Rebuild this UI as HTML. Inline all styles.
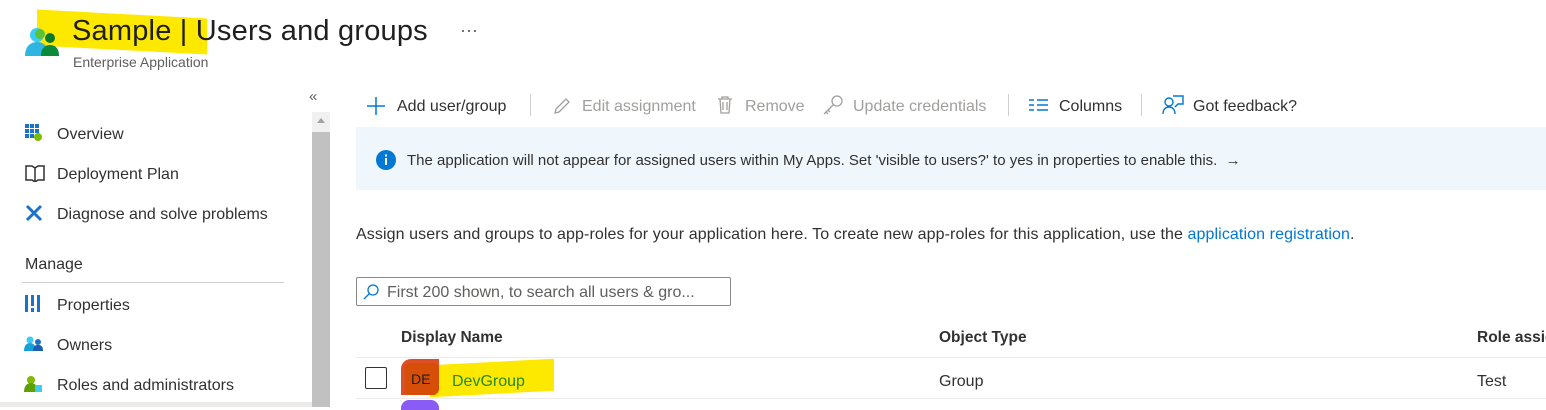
<!DOCTYPE html>
<html><head><meta charset="utf-8"><style>
*{margin:0;padding:0;box-sizing:border-box}
body{width:1546px;height:407px;overflow:hidden;background:#fff;font-family:"Segoe UI","Liberation Sans",sans-serif;color:#323130;position:relative;font-size:16px}
.a{position:absolute;white-space:nowrap}
.t{margin-top:2px}
.g{color:#a19f9d}
</style></head><body>
<div class="a" style="left:37px;top:14px;width:170px;height:36px;background:#fde800;transform:skewY(3deg)"></div>
<svg class="a" style="left:24px;top:26px" width="38" height="32" viewBox="0 0 38 32">
<circle cx="13" cy="9" r="7" fill="#3ccbf4"/><path d="M1 30c0-10 6-14 12-14s12 4 12 14z" fill="#30b5e0"/>
<circle cx="26" cy="12" r="5" fill="#0b7a2b"/><path d="M17 30c0-8 4-11 9-11s9 3 9 11z" fill="#0b8a3a"/>
<circle cx="16" cy="8" r="5" fill="#5bc236"/></svg>
<div class="a t" style="left:72px;top:13px;font-size:29px;color:#201f1e;letter-spacing:0.2px">Sample | Users and groups</div>
<div class="a" style="left:460px;top:20px;font-size:18px;color:#605e5c">···</div>
<div class="a t" style="left:73px;top:52px;font-size:14px;color:#605e5c">Enterprise Application</div>
<div class="a" style="left:309px;top:88px;font-size:15px;color:#605e5c">«</div>
<div class="a" style="left:312px;top:112px;width:18px;height:295px;background:#c1c1c1"></div>
<div class="a" style="left:312px;top:112px;width:18px;height:20px;background:#f0f0f0"></div>
<div class="a" style="left:317px;top:118px;border:4px solid transparent;border-bottom:5px solid #a3a3a3;border-top:0"></div>
<svg class="a" style="left:25px;top:124px" width="18" height="18"><g fill="#1a73c8"><rect x="0" y="0" width="4" height="4"/><rect x="5" y="0" width="4" height="4"/><rect x="10" y="0" width="4" height="4"/><rect x="0" y="5" width="4" height="4"/><rect x="5" y="5" width="4" height="4"/><rect x="10" y="5" width="4" height="4"/><rect x="0" y="10" width="4" height="4"/><rect x="5" y="10" width="4" height="4"/></g><circle cx="13" cy="13" r="4" fill="#7fba00"/></svg>
<div class="a t" style="left:57px;top:124px">Overview</div>
<svg class="a" style="left:25px;top:164px" width="20" height="18"><path d="M1 2h6l3 2 3-2h6v14h-6l-3 2-3-2H1z M10 4v14" fill="none" stroke="#323130" stroke-width="1.5"/></svg>
<div class="a t" style="left:57px;top:164px">Deployment Plan</div>
<svg class="a" style="left:25px;top:204px" width="18" height="18"><path d="M2 2l14 14M16 2L2 16" stroke="#1a73c8" stroke-width="3"/></svg>
<div class="a t" style="left:57px;top:204px">Diagnose and solve problems</div>
<div class="a t" style="left:25px;top:254px">Manage</div>
<div class="a" style="left:22px;top:282px;width:262px;height:1px;background:#d2d0ce"></div>
<svg class="a" style="left:24px;top:295px" width="18" height="18"><g fill="#1a73c8"><rect x="1" y="0" width="3" height="17"/><rect x="7" y="0" width="3" height="11"/><rect x="7" y="13" width="3" height="4"/><rect x="13" y="0" width="3" height="17"/></g></svg>
<div class="a t" style="left:57px;top:295px">Properties</div>
<svg class="a" style="left:24px;top:336px" width="20" height="16"><circle cx="6" cy="4" r="3.5" fill="#3ccbf4"/><path d="M0 15c0-6 3-8 6-8s6 2 6 8z" fill="#1a9fd8"/><circle cx="14" cy="6" r="3" fill="#1a73c8"/><path d="M9 15c0-5 2-6 5-6s5 1 5 6z" fill="#1a5fb0"/></svg>
<div class="a t" style="left:57px;top:335px">Owners</div>
<svg class="a" style="left:24px;top:375px" width="20" height="18"><circle cx="7" cy="5" r="4" fill="#7fba00"/><path d="M0 17c0-6 3-9 7-9s7 3 7 9z" fill="#5ea000"/><rect x="11" y="10" width="7" height="7" fill="#3ccbf4"/></svg>
<div class="a t" style="left:57px;top:375px">Roles and administrators</div>
<div class="a" style="left:0;top:402px;width:312px;height:5px;background:#edebe9"></div>
<svg class="a" style="left:366px;top:96px" width="20" height="20"><path d="M10 1v18M1 10h18" stroke="#0078d4" stroke-width="1.5"/></svg>
<div class="a t" style="left:397px;top:96px">Add user/group</div>
<div class="a" style="left:530px;top:94px;width:1px;height:22px;background:#d2d0ce"></div>
<svg class="a" style="left:552px;top:96px" width="20" height="20"><path d="M3 17l1-4L14 3l3 3L7 16z" fill="none" stroke="#a19f9d" stroke-width="1.3"/></svg>
<div class="a g t" style="left:582px;top:96px">Edit assignment</div>
<svg class="a" style="left:716px;top:95px" width="18" height="20"><path d="M2 4h14M6 4V2h6v2M4 4l1 14h8l1-14M7 7v8M11 7v8" fill="none" stroke="#a19f9d" stroke-width="1.3"/></svg>
<div class="a g t" style="left:745px;top:96px">Remove</div>
<svg class="a" style="left:822px;top:95px" width="22" height="20"><circle cx="15" cy="6" r="5" fill="none" stroke="#a19f9d" stroke-width="1.3"/><path d="M11 10L2 19M4 17l2 2M6 15l2 2" stroke="#a19f9d" stroke-width="1.3"/></svg>
<div class="a g t" style="left:853px;top:96px">Update credentials</div>
<div class="a" style="left:1008px;top:94px;width:1px;height:22px;background:#d2d0ce"></div>
<svg class="a" style="left:1029px;top:99px" width="20" height="14"><path d="M0 1h5M8 1h11M0 6h5M8 6h11M0 11h5M8 11h11" stroke="#0078d4" stroke-width="1.5"/></svg>
<div class="a t" style="left:1059px;top:96px">Columns</div>
<div class="a" style="left:1141px;top:94px;width:1px;height:22px;background:#d2d0ce"></div>
<svg class="a" style="left:1162px;top:95px" width="22" height="20"><circle cx="7" cy="7" r="4" fill="none" stroke="#0078d4" stroke-width="1.4"/><path d="M1 19c0-5 3-7 6-7s6 2 6 7M11 1h10v8h-5l-3 3" fill="none" stroke="#0078d4" stroke-width="1.4"/></svg>
<div class="a t" style="left:1193px;top:96px">Got feedback?</div>
<div class="a" style="left:356px;top:127px;width:1190px;height:63px;background:#eff6fc"></div>
<svg class="a" style="left:376px;top:150px" width="20" height="20"><circle cx="10" cy="10" r="10" fill="#0078d4"/><rect x="9" y="8" width="2" height="7" fill="#fff"/><rect x="9" y="4.5" width="2" height="2" fill="#fff"/></svg>
<div class="a t" style="left:407px;top:150px;font-size:15px">The application will not appear for assigned users within My Apps. Set 'visible to users?' to yes in properties to enable this. &nbsp;→</div>
<div class="a t" style="left:356px;top:224px;letter-spacing:0.1px">Assign users and groups to app-roles for your application here. To create new app-roles for this application, use the <span style="color:#0078d4">application registration</span>.</div>
<div class="a" style="left:356px;top:277px;width:375px;height:29px;border:1px solid #8a8886;border-radius:2px"></div>
<svg class="a" style="left:363px;top:284px" width="16" height="16"><circle cx="10" cy="6" r="5" fill="none" stroke="#0078d4" stroke-width="1.3"/><path d="M6.5 9.5L1 15" stroke="#0078d4" stroke-width="1.3"/></svg>
<div class="a t" style="left:387px;top:282px;color:#605e5c">First 200 shown, to search all users &amp; gro...</div>
<div class="a t" style="left:401px;top:327px;font-weight:600;font-size:15.5px">Display Name</div>
<div class="a t" style="left:939px;top:327px;font-weight:600;font-size:15.5px">Object Type</div>
<div class="a t" style="left:1477px;top:327px;font-weight:600;font-size:15.5px">Role assig</div>
<div class="a" style="left:356px;top:357px;width:1190px;height:1px;background:#edebe9"></div>
<div class="a" style="left:365px;top:367px;width:22px;height:22px;border:1px solid #323130;border-radius:2px"></div>
<div class="a" style="left:430px;top:362px;width:124px;height:32px;background:#fde800;transform:skewY(-3deg)"></div>
<div class="a" style="left:401px;top:359px;width:38px;height:36px;background:#da4f24;border-radius:10px 0 8px 0"></div>
<div class="a" style="left:405px;top:363px;width:34px;height:32px;background:#d64e07;border-radius:6px"></div>
<div class="a" style="left:411px;top:371px;font-size:14px;color:#201f1e">DE</div>
<div class="a t" style="left:452px;top:371px;color:#228b22">DevGroup</div>
<div class="a t" style="left:939px;top:371px">Group</div>
<div class="a t" style="left:1477px;top:371px">Test</div>
<div class="a" style="left:356px;top:398px;width:1190px;height:1px;background:#edebe9"></div>
<div class="a" style="left:401px;top:400px;width:38px;height:10px;background:#8a5cf6;border-radius:8px 8px 0 0"></div>
</body></html>
